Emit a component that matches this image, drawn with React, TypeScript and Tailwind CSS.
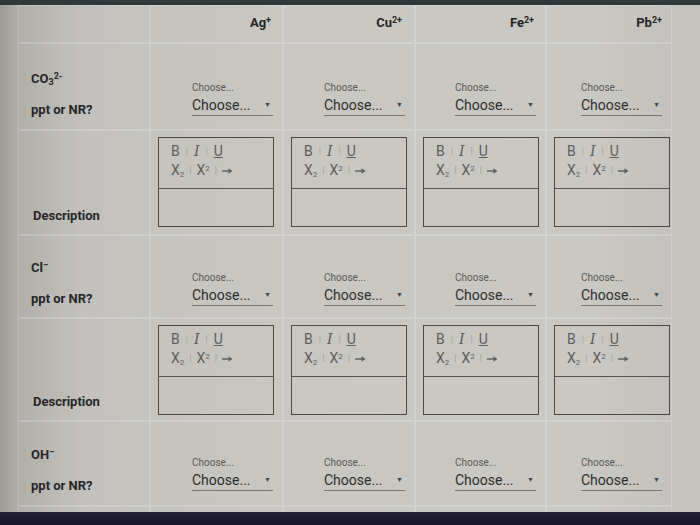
import React from 'react';

const ions = [
  { name: 'Ag', charge: '+' },
  { name: 'Cu', charge: '2+' },
  { name: 'Fe', charge: '2+' },
  { name: 'Pb', charge: '2+' },
];

const headerPad = ['pr-[11px]', 'pr-[12px]', 'pr-[11px]', 'pr-[9px]'];

const Cell: React.FC<{ className?: string; children?: React.ReactNode }> = ({ className = '', children }) => (
  <div className={`border border-white/20 bg-black/[0.015] ${className}`}>{children}</div>
);

const Dropdown: React.FC = () => (
  <div className="w-[81px]">
    <div className="text-[10px] leading-[11px] text-[#5a5a58]">Choose...</div>
    <div className="mt-[4px] flex items-center justify-between border-b-[1.5px] border-[#767571] pb-[2px] text-[14px] leading-[16px] text-[#2e2e2d]">
      <span>Choose...</span>
      <span className="mr-[2px] text-[7px] text-[#444]">▼</span>
    </div>
  </div>
);

const Sep = () => <span className="text-[9px] text-[#a09f9b]">|</span>;

// indent arrow drawn as svg, the font glyph is too thin
const Arrow = () => (
  <svg width="11" height="8" viewBox="0 0 11 8" className="mt-[1px]">
    <path d="M0 4 H8" stroke="#5e5e5c" strokeWidth="1.4" />
    <path d="M6.5 1.2 L10.5 4 L6.5 6.8 Z" fill="#5e5e5c" />
  </svg>
);

const Editor: React.FC<{ cut?: boolean }> = ({ cut }) => (
  <div className="flex h-[90px] w-[116px] flex-col border-[1.5px] border-[#4b4a47]">
    <div className="h-[51px] border-b border-[#555450] pl-[12px] pt-[4px] text-[14px] leading-[19px] text-[#5e5e5c]">
      <div className="flex items-center gap-[6px]">
        <span>B</span>
        <Sep />
        <span className="font-['DejaVu_Serif',serif] italic">I</span>
        <Sep />
        <span className="underline">U</span>
      </div>
      <div className="flex items-center gap-[5px]">
        <span>
          X<sub className="text-[8px]">2</sub>
        </span>
        <Sep />
        <span>
          X<sup className="text-[8px]">2</sup>
        </span>
        <Sep />
        <Arrow />
      </div>
    </div>
    {!cut && <div className="flex-1" />}
  </div>
);

type Anion = { label: React.ReactNode; rowH: string; labelPt: string; dropPt: string; editorH: string };

const anions: Anion[] = [
  {
    label: (
      <span>
        CO<sub className="text-[9px]">3</sub>
        <sup className="text-[9px]">2-</sup>
      </span>
    ),
    rowH: 'h-[87px]',
    labelPt: 'pt-[27px]',
    dropPt: 'pt-[38px]',
    editorH: 'h-[105px]',
  },
  {
    label: (
      <span>
        Cl<sup className="text-[9px]">−</sup>
      </span>
    ),
    rowH: 'h-[83px]',
    labelPt: 'pt-[24px]',
    dropPt: 'pt-[36px]',
    editorH: 'h-[103px]',
  },
  {
    label: (
      <span>
        OH<sup className="text-[9px]">−</sup>
      </span>
    ),
    rowH: 'h-[85px]',
    labelPt: 'pt-[25px]',
    dropPt: 'pt-[35px]',
    editorH: 'h-[105px]',
  },
];

export default function App() {
  return (
    <div className="flex h-[525px] w-[700px] flex-col overflow-hidden bg-[linear-gradient(to_right,#9c9b96_0%,#b4b3ae_3%,#c6c5c0_12%,#cccbc6_40%,#cdccc7_85%,#c3c2bd_100%)] font-['Roboto','Liberation_Sans',sans-serif]">
      {/* top bezel */}
      <div className="h-[5px] shrink-0 bg-[#2e393c]" />

      <div className="flex flex-1 overflow-hidden pl-[18px]">
        <div className="grid grid-cols-[132px_133px_132px_131px_126px] content-start">
          {/* header row */}
          <Cell className="h-[38px]" />
          {ions.map((ion, i) => (
            <Cell key={ion.name} className={`flex h-[38px] items-center justify-end pb-[2px] ${headerPad[i]}`}>
              <span className="text-[13px] font-bold text-[#262626]">
                {ion.name}
                <sup className="text-[9px]">{ion.charge}</sup>
              </span>
            </Cell>
          ))}

          {anions.map((a, idx) => (
            <React.Fragment key={idx}>
              <Cell className={`${a.rowH} pl-[12px] ${a.labelPt} text-[13px] font-bold leading-[16px] text-[#272727]`}>
                <div>{a.label}</div>
                <div className="mt-[15px]">ppt or NR?</div>
              </Cell>
              {ions.map((ion) => (
                <Cell key={ion.name} className={`flex ${a.rowH} justify-end pr-[9px] ${a.dropPt}`}>
                  <Dropdown />
                </Cell>
              ))}

              <Cell className={`flex ${a.editorH} items-end pb-[9px] pl-[14px] text-[13px] font-bold text-[#272727]`}>
                {idx < 2 && <span>Description</span>}
              </Cell>
              {ions.map((ion) => (
                <Cell key={ion.name} className={`${a.editorH} pl-[7px] pt-[6px]`}>
                  <Editor cut={idx === 2} />
                </Cell>
              ))}
            </React.Fragment>
          ))}
        </div>
      </div>

      {/* bottom bezel */}
      <div className="h-[13px] shrink-0 bg-[linear-gradient(to_bottom,#24213a,#151420)]" />
    </div>
  );
}
